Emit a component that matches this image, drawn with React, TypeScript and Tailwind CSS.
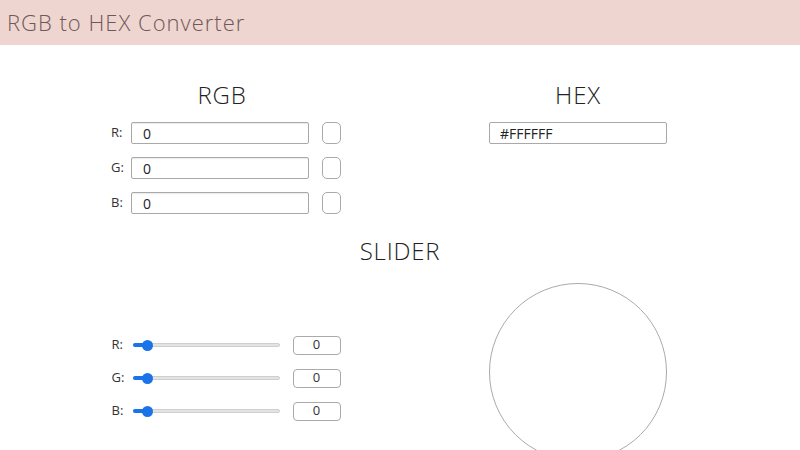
import React from "react";

const font = { fontFamily: '"Open Sans", "Noto Sans", Arial, sans-serif' };

function RgbRow({ label }: { label: string }) {
  return (
    <div className="flex items-center h-[22px]">
      <span className="w-[20px] text-[13px] text-[#333]">{label}</span>
      <input
        readOnly
        value="0"
        className="w-[178px] h-[22px] border border-[#a9a9a9] rounded-[2px] px-[11px] text-[14px] text-[#222] outline-none shadow-[inset_0_1px_1px_rgba(0,0,0,0.08)]"
      />
      <div className="ml-[13px] w-[19px] h-[22px] border border-[#aaa] rounded-[5px]" />
    </div>
  );
}

function SliderRow({ label }: { label: string }) {
  return (
    <div className="flex items-center h-[20px]">
      <span className="w-[21px] text-[13px] text-[#333]">{label}</span>
      <div className="relative w-[147px] h-[16px] flex items-center">
        <div className="absolute left-0 right-0 h-[4px] rounded-full bg-[#e3e3e3] border border-[#cfcfcf]" />
        <div className="absolute left-0 w-[14px] h-[4px] rounded-l-full bg-[#1a73e8]" />
        <div className="absolute left-[9px] w-[11px] h-[11px] rounded-full bg-[#1a73e8]" />
      </div>
      <div className="ml-[13px] w-[48px] h-[19px] border border-[#aaa] rounded-[4px] flex items-center justify-center text-[13px] text-[#333]">
        0
      </div>
    </div>
  );
}

export default function App() {
  return (
    <div className="w-[800px] h-[450px] overflow-hidden bg-white" style={font}>
      <header className="h-[45px] bg-[#efd5d0] flex items-center px-[7px]">
        <h1 className="text-[22px] text-[#6e5858] font-light tracking-[1px]">RGB to HEX Converter</h1>
      </header>
      <div className="grid grid-cols-2 px-[44px] pt-[35px]">
        <div className="flex flex-col items-center">
          <h2 className="text-[24px] leading-[30px] font-light text-[#222] h-[30px] tracking-[0.8px]">RGB</h2>
          <div className="mt-[12px] flex flex-col gap-[13px] ml-[8px]">
            <RgbRow label="R:" />
            <RgbRow label="G:" />
            <RgbRow label="B:" />
          </div>
        </div>
        <div className="flex flex-col items-center">
          <h2 className="text-[24px] leading-[30px] font-light text-[#222] h-[30px] tracking-[0.8px]">HEX</h2>
          <input
            readOnly
            value="#FFFFFF"
            className="mt-[12px] w-[178px] h-[22px] border border-[#a9a9a9] rounded-[2px] px-[10px] text-[14px] text-[#222] outline-none"
          />
        </div>
      </div>
      <h2 className="mt-[22px] text-center text-[24px] leading-[30px] font-light text-[#222] tracking-[0.8px]">SLIDER</h2>
      <div className="grid grid-cols-2 px-[44px] mt-[17px]">
        <div className="flex flex-col items-center justify-center pt-[12px]">
          <div className="flex flex-col gap-[13px] ml-[8px]">
            <SliderRow label="R:" />
            <SliderRow label="G:" />
            <SliderRow label="B:" />
          </div>
        </div>
        <div className="flex justify-center">
          <div className="w-[178px] h-[178px] rounded-full border border-[#aaa]" />
        </div>
      </div>
    </div>
  );
}
